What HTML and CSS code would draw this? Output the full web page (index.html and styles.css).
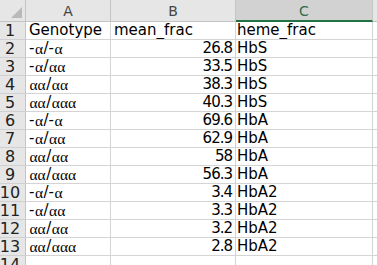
FILE: index.html
```html
<!DOCTYPE html>
<html>
<head>
<meta charset="utf-8">
<link rel="stylesheet" href="styles.css">
</head>
<body>
<div class="sheet">
  <div class="hd corner"><span class="tri"></span></div>
  <div class="hd col">A</div>
  <div class="hd col">B</div>
  <div class="hd col sel">C</div>
  <div class="hd col"></div>

  <div class="rh"><span>1</span></div><div class="c">Genotype</div><div class="c">mean_frac</div><div class="c">heme_frac</div><div class="c"></div>
  <div class="rh"><span>2</span></div><div class="c">-<i>α</i>/-<i>α</i></div><div class="c n">26.8</div><div class="c">HbS</div><div class="c"></div>
  <div class="rh"><span>3</span></div><div class="c">-<i>α</i>/<i>αα</i></div><div class="c n">33.5</div><div class="c">HbS</div><div class="c"></div>
  <div class="rh"><span>4</span></div><div class="c"><i>αα</i>/<i>αα</i></div><div class="c n">38.3</div><div class="c">HbS</div><div class="c"></div>
  <div class="rh"><span>5</span></div><div class="c"><i>αα</i>/<i>ααα</i></div><div class="c n">40.3</div><div class="c">HbS</div><div class="c"></div>
  <div class="rh"><span>6</span></div><div class="c">-<i>α</i>/-<i>α</i></div><div class="c n">69.6</div><div class="c">HbA</div><div class="c"></div>
  <div class="rh"><span>7</span></div><div class="c">-<i>α</i>/<i>αα</i></div><div class="c n">62.9</div><div class="c">HbA</div><div class="c"></div>
  <div class="rh"><span>8</span></div><div class="c"><i>αα</i>/<i>αα</i></div><div class="c n">58</div><div class="c">HbA</div><div class="c"></div>
  <div class="rh"><span>9</span></div><div class="c"><i>αα</i>/<i>ααα</i></div><div class="c n">56.3</div><div class="c">HbA</div><div class="c"></div>
  <div class="rh"><span>10</span></div><div class="c">-<i>α</i>/-<i>α</i></div><div class="c n">3.4</div><div class="c">HbA2</div><div class="c"></div>
  <div class="rh"><span>11</span></div><div class="c">-<i>α</i>/<i>αα</i></div><div class="c n">3.3</div><div class="c">HbA2</div><div class="c"></div>
  <div class="rh"><span>12</span></div><div class="c"><i>αα</i>/<i>αα</i></div><div class="c n">3.2</div><div class="c">HbA2</div><div class="c"></div>
  <div class="rh"><span>13</span></div><div class="c"><i>αα</i>/<i>ααα</i></div><div class="c n">2.8</div><div class="c">HbA2</div><div class="c"></div>
  <div class="rh"><span>14</span></div><div class="c"></div><div class="c"></div><div class="c"></div><div class="c"></div>
</div>
</body>
</html>
```

FILE: styles.css
```css
html, body {
  margin: 0;
  padding: 0;
  background: #ffffff;
  overflow: hidden;
}
.sheet {
  display: grid;
  grid-template-columns: 26px 85px 125px 137px 1fr;
  grid-template-rows: 22px repeat(14, 18px);
  font-family: "DejaVu Sans", sans-serif;
  color: #000;
  width: 100%;
  height: 265px;
  overflow: hidden;
}
.hd {
  background: #e6e6e6;
  border-right: 1px solid #c4c4c4;
  border-bottom: 1px solid #c4c4c4;
  box-sizing: border-box;
  position: relative;
}
.corner .tri {
  position: absolute;
  right: 3px;
  bottom: 3px;
  width: 0;
  height: 0;
  border-left: 11px solid transparent;
  border-bottom: 11px solid #b9b9b9;
}
.col {
  display: flex;
  align-items: flex-end;
  justify-content: center;
  font-size: 14px;
  line-height: 18px;
  color: #444;
  padding-bottom: 1px;
}
.col.sel {
  background: #d2d2d2;
  color: #2e6b4a;
  border-bottom: 2px solid #217346;
  padding-bottom: 0;
}
.rh {
  background: #e6e6e6;
  border-right: 1px solid #c4c4c4;
  border-bottom: 1px solid #d0d0d0;
  box-sizing: border-box;
  display: flex;
  align-items: flex-end;
  justify-content: center;
  padding-right: 5px;
  font-size: 16px;
  line-height: 17px;
  color: #222;
}
.c {
  border-right: 1px solid #d4d4d4;
  border-bottom: 1px solid #d4d4d4;
  box-sizing: border-box;
  font-size: 15px;
  line-height: 17px;
  padding: 0 2px 0 3px;
  white-space: nowrap;
  overflow: hidden;
  display: flex;
  align-items: flex-end;
}
.c:nth-child(5n+4) {
  padding-left: 1px;
}
.n {
  justify-content: flex-end;
  letter-spacing: -1px;
  padding-right: 3px;
}
.c i {
  font-style: normal;
  font-family: "Liberation Serif", serif;
  font-size: 15.5px;
  padding: 0 0.5px;
}
```
